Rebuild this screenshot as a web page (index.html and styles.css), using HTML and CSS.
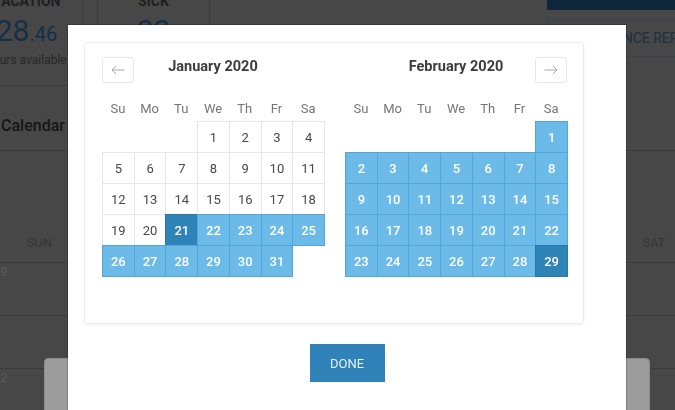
FILE: index.html
```html
<!DOCTYPE html>
<html lang="en">
<head>
<meta charset="utf-8">
<title>Time off calendar</title>
<link rel="stylesheet" href="styles.css">
</head>
<body>
<div class="page">
  <div class="stats-row">
    <div class="stat">
      <div class="stat-label">Vacation</div>
      <div class="stat-value">28<span class="stat-dec">.46</span></div>
      <div class="stat-sub">hours available</div>
    </div>
    <div class="stat">
      <div class="stat-label">Sick</div>
      <div class="stat-value">22</div>
      <div class="stat-sub">hours available</div>
    </div>
    <div class="actions">
      <div class="btn-primary">Request time off</div>
      <div class="btn-outline">Balance report</div>
    </div>
  </div>

  <h2 class="cal-title">Calendar</h2>

  <div class="cal">
    <div class="cal-head">
      <span>Sun</span><span>Mon</span><span>Tue</span><span>Wed</span><span>Thu</span><span>Fri</span><span>Sat</span>
    </div>
    <div class="cal-row">
      <span>29</span><span>30</span><span>31</span><span>1</span><span>2</span><span>3</span><span>4</span>
    </div>
    <div class="cal-row">
      <span>5</span><span>6</span><span>7</span><span>8</span><span>9</span><span>10</span><span>11</span>
    </div>
    <div class="cal-row">
      <span>12</span><span>13</span><span>14</span><span>15</span><span>16</span><span>17</span><span>18</span>
    </div>
  </div>
</div>

<div class="under-panel"></div>

<div class="modal">
  <div class="picker">
    <div class="month">
      <div class="month-head">
        <button class="nav-btn" type="button" aria-label="Previous month">
          <svg width="14" height="10" viewBox="0 0 14 10"><path d="M13.5 5H1M5 1L1 5l4 4" fill="none" stroke="#a9a9a9" stroke-width="1"/></svg>
        </button>
        <div class="caption">January 2020</div>
        <span></span>
      </div>
      <div class="weekdays"><span>Su</span><span>Mo</span><span>Tu</span><span>We</span><span>Th</span><span>Fr</span><span>Sa</span></div>
      <div class="days">
        <span class="empty"></span><span class="empty"></span><span class="empty"></span>
        <span class="day">1</span><span class="day">2</span><span class="day">3</span><span class="day">4</span>
        <span class="day">5</span><span class="day">6</span><span class="day">7</span><span class="day">8</span><span class="day">9</span><span class="day">10</span><span class="day">11</span>
        <span class="day">12</span><span class="day">13</span><span class="day">14</span><span class="day">15</span><span class="day">16</span><span class="day">17</span><span class="day">18</span>
        <span class="day">19</span><span class="day">20</span><span class="day edge">21</span><span class="day span">22</span><span class="day span">23</span><span class="day span">24</span><span class="day span">25</span>
        <span class="day span">26</span><span class="day span">27</span><span class="day span">28</span><span class="day span">29</span><span class="day span">30</span><span class="day span">31</span>
      </div>
    </div>

    <div class="month">
      <div class="month-head">
        <span></span>
        <div class="caption">February 2020</div>
        <button class="nav-btn" type="button" aria-label="Next month">
          <svg width="14" height="10" viewBox="0 0 14 10"><path d="M0.5 5H13M9 1l4 4-4 4" fill="none" stroke="#a9a9a9" stroke-width="1"/></svg>
        </button>
      </div>
      <div class="weekdays"><span>Su</span><span>Mo</span><span>Tu</span><span>We</span><span>Th</span><span>Fr</span><span>Sa</span></div>
      <div class="days">
        <span class="empty"></span><span class="empty"></span><span class="empty"></span><span class="empty"></span><span class="empty"></span><span class="empty"></span>
        <span class="day span">1</span>
        <span class="day span">2</span><span class="day span">3</span><span class="day span">4</span><span class="day span">5</span><span class="day span">6</span><span class="day span">7</span><span class="day span">8</span>
        <span class="day span">9</span><span class="day span">10</span><span class="day span">11</span><span class="day span">12</span><span class="day span">13</span><span class="day span">14</span><span class="day span">15</span>
        <span class="day span">16</span><span class="day span">17</span><span class="day span">18</span><span class="day span">19</span><span class="day span">20</span><span class="day span">21</span><span class="day span">22</span>
        <span class="day span">23</span><span class="day span">24</span><span class="day span">25</span><span class="day span">26</span><span class="day span">27</span><span class="day span">28</span><span class="day edge">29</span>
      </div>
    </div>
  </div>
  <div class="modal-foot">
    <button class="done-btn" type="button">DONE</button>
  </div>
</div>
</body>
</html>
```

FILE: styles.css
```css
* { box-sizing: border-box; }

html, body {
  margin: 0;
  padding: 0;
}

body {
  width: 675px;
  height: 410px;
  overflow: hidden;
  background: #474747;
  font-family: "Roboto", "Liberation Sans", sans-serif;
}

/* ---------- dimmed page behind the modal ---------- */
.page {
  height: 410px;
  overflow: hidden;
}

.stats-row {
  display: flex;
  gap: 14px;
  margin: -20px 0 0 -30px;
  width: 900px;
}

.stat {
  width: 113px;
  height: 106px;
  flex-shrink: 0;
  border: 1px solid #3b3b3b;
  padding-top: 12px;
  text-align: center;
}

.stat-label {
  font-size: 14px;
  line-height: 17px;
  font-weight: 700;
  text-transform: uppercase;
  color: #1f1f1f;
}

.stat-value {
  margin-top: 3px;
  font-size: 30px;
  line-height: 36px;
  color: #143049;
}

.stat-dec { font-size: 20px; }

.stat-sub {
  margin-top: 0;
  font-size: 12px;
  line-height: 16px;
  color: #282828;
}

.actions {
  margin-left: 323px;
  width: 200px;
  flex-shrink: 0;
  display: flex;
  flex-direction: column;
  gap: 9px;
}

.btn-primary {
  height: 30px;
  background: #10263a;
  color: #3a4a58;
  font-size: 14px;
  text-transform: uppercase;
}

.btn-outline {
  height: 38px;
  border: 1px solid #38434c;
  padding-left: 40px;
  font-size: 14px;
  line-height: 36px;
  text-transform: uppercase;
  color: #1c3143;
}

.cal-title {
  margin: 29px 0 0 1px;
  font-size: 16px;
  line-height: 22px;
  font-weight: 500;
  color: #161616;
}

.cal {
  margin: 13px 0 0 -12px;
  width: 717px;
  border-top: 1px solid #3a3a3a;
}

.cal-head,
.cal-row {
  display: grid;
  grid-template-columns: repeat(7, 1fr);
  border-bottom: 1px solid #3a3a3a;
}

.cal-head {
  height: 112px;
  align-items: end;
  padding-bottom: 11px;
}

.cal-head span {
  text-align: center;
  font-size: 13px;
  line-height: 16px;
  text-transform: uppercase;
  color: #363636;
}

.cal-row {
  height: 53px;
}

.cal-row span {
  padding: 1px 5px;
  font-size: 13px;
  line-height: 16px;
  color: #5a5a5a;
}

.under-panel {
  position: fixed;
  left: 44px;
  top: 358px;
  width: 606px;
  height: 70px;
  background: #9c9c9c;
  border: 1px solid #8c8c8c;
  border-radius: 4px 4px 0 0;
}

/* ---------- modal ---------- */
.modal {
  position: fixed;
  left: 68px;
  top: 25px;
  width: 558px;
  height: 400px;
  background: #fff;
  box-shadow: 0 0 0 1px rgba(0, 0, 0, 0.18);
  padding: 17px 16px 0;
}

.picker {
  width: 500px;
  height: 282px;
  border: 1px solid #ebebeb;
  border-radius: 3px;
  box-shadow: 0 1px 3px rgba(0, 0, 0, 0.06);
  padding: 14px 16px 0 17px;
  display: flex;
  gap: 21px;
}

.month {
  width: 222px;
}

.month-head {
  display: grid;
  grid-template-columns: 32px 1fr 32px;
  height: 26px;
}

.nav-btn {
  width: 32px;
  height: 26px;
  margin: 0;
  padding: 0;
  border: 1px solid #e4e7e7;
  border-radius: 3px;
  background: #fff;
  display: flex;
  align-items: center;
  justify-content: center;
}

.nav-btn svg { display: block; }

.caption {
  text-align: center;
  font-size: 14.5px;
  line-height: 20px;
  font-weight: 700;
  color: #3c3c3c;
}

.weekdays {
  display: grid;
  grid-template-columns: repeat(7, 1fr);
  margin-top: 16px;
  height: 20px;
}

.weekdays span {
  text-align: center;
  font-size: 13px;
  line-height: 20px;
  color: #757575;
}

.days {
  display: grid;
  grid-template-columns: repeat(7, 1fr);
  grid-auto-rows: 31px;
  margin-top: 2px;
}

.day {
  display: flex;
  align-items: center;
  justify-content: center;
  margin: 0 -1px -1px 0;
  border: 1px solid #e4e7e7;
  background: #fff;
  font-size: 13px;
  color: #484848;
}

.day.span {
  background: #6cbae8;
  border-color: #52a6da;
  color: #fff;
  font-weight: 500;
}

.day.edge {
  background: #2e84b7;
  border-color: #2877a7;
  color: #fff;
  font-weight: 500;
}

.modal-foot {
  display: flex;
  justify-content: center;
  padding-top: 20px;
}

.done-btn {
  width: 75px;
  height: 38px;
  margin: 0;
  border: none;
  border-radius: 0;
  background: #2f83b8;
  color: #e8f1f8;
  font-family: "Roboto", "Liberation Sans", sans-serif;
  font-size: 13px;
  padding: 0;
}
```
